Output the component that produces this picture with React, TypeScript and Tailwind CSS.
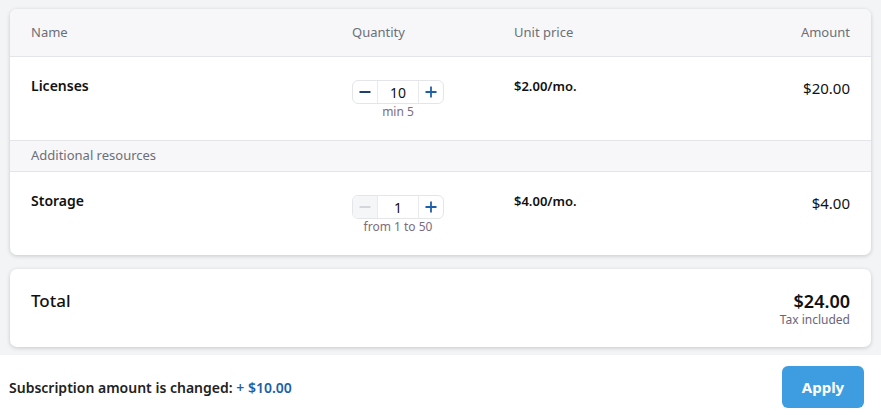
import React from "react";

const font = { fontFamily: '"Noto Sans", "Open Sans", sans-serif' };

function Stepper({ value, hint, minusDisabled }: { value: number; hint: string; minusDisabled?: boolean }) {
  return (
    <div className="flex w-[92px] flex-col items-center">
      <div className="mt-[4px] flex h-[24px] w-[92px] items-stretch rounded-[6px] border border-[#e3e5e9] bg-white">
        <div
          className={`flex w-[24px] items-center justify-center rounded-l-[6px] ${
            minusDisabled ? "bg-[#f5f6f8]" : ""
          }`}
        >
          <svg width="12" height="12" viewBox="0 0 12 12">
            <path d="M0.5 6h11" stroke={minusDisabled ? "#d3d6db" : "#1d3f73"} strokeWidth="1.8" />
          </svg>
        </div>
        <div className="flex flex-1 items-center justify-center border-x border-[#e8eaee] text-[14px] text-[#111]">
          {value}
        </div>
        <div className="flex w-[24px] items-center justify-center">
          <svg width="12" height="12" viewBox="0 0 12 12">
            <path d="M0.5 6h11M6 0.5v11" stroke="#1d5fa8" strokeWidth="1.8" />
          </svg>
        </div>
      </div>
      <div className="whitespace-nowrap text-[12px] leading-[16px] text-[#7a6d80]">{hint}</div>
    </div>
  );
}

function ItemRow({
  name,
  value,
  hint,
  price,
  amount,
  minusDisabled,
}: {
  name: string;
  value: number;
  hint: string;
  price: string;
  amount: string;
  minusDisabled?: boolean;
}) {
  return (
    <div className="grid h-[83px] grid-cols-[321px_162px_1fr_auto] px-[21px] pt-[19px]">
      <div className="text-[14px] font-semibold leading-[20px] text-[#111]">{name}</div>
      <Stepper value={value} hint={hint} minusDisabled={minusDisabled} />
      <div className="text-[13px] font-semibold leading-[20px] text-[#111]">{price}</div>
      <div className="mt-[2px] text-right text-[15px] leading-[20px] text-[#111]">{amount}</div>
    </div>
  );
}

export default function App() {
  return (
    <div style={font} className="flex h-[415px] w-[881px] flex-col bg-white">
      <div className="flex flex-col gap-[14px] bg-[#f3f4f6] px-[10px] pb-[8px] pt-[9px]">
        <div className="overflow-hidden rounded-[7px] bg-white shadow-[0_1px_4px_rgba(0,0,0,0.18)]">
          <div className="grid h-[48px] grid-cols-[321px_162px_1fr_auto] items-center border-b border-[#e4e5e9] bg-[#f7f7f9] px-[21px] pt-[1px] text-[13px] text-[#6b6f78]">
            <div>Name</div>
            <div>Quantity</div>
            <div>Unit price</div>
            <div className="text-right">Amount</div>
          </div>
          <ItemRow name="Licenses" value={10} hint="min 5" price="$2.00/mo." amount="$20.00" />
          <div className="flex h-[32px] items-center border-y border-[#e4e5e9] bg-[#f7f7f9] px-[21px] text-[13px] text-[#6b6f78]">
            Additional resources
          </div>
          <ItemRow
            name="Storage"
            value={1}
            hint="from 1 to 50"
            price="$4.00/mo."
            amount="$4.00"
            minusDisabled
          />
        </div>
        <div className="flex h-[78px] items-start justify-between rounded-[7px] bg-white px-[21px] pt-[20px] shadow-[0_1px_4px_rgba(0,0,0,0.18)]">
          <div className="text-[17px] font-medium leading-[24px] text-[#111]">Total</div>
          <div className="flex flex-col items-end">
            <div className="text-[18px] font-semibold leading-[24px] text-[#111]">$24.00</div>
            <div className="text-[12px] leading-[14px] text-[#6b6478]">Tax included</div>
          </div>
        </div>
      </div>
      <div className="flex flex-1 items-center justify-between pl-[9px] pr-[17px] pt-[4px]">
        <div className="text-[14px] font-semibold text-[#222]">
          Subscription amount is changed: <span className="text-[#1d5fa8]">+ $10.00</span>
        </div>
        <button className="h-[42px] w-[82px] rounded-[6px] bg-[#3d9de0] text-[15px] font-bold text-white">
          Apply
        </button>
      </div>
    </div>
  );
}
